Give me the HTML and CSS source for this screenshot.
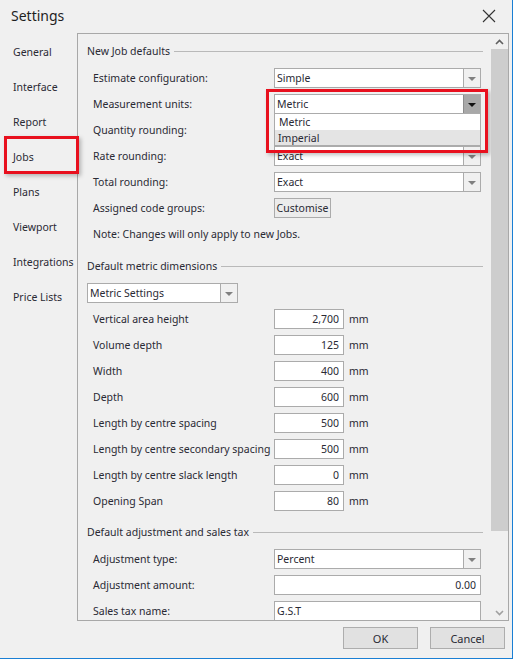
FILE: index.html
```html
<!DOCTYPE html>
<html>
<head>
<meta charset="utf-8">
<link rel="stylesheet" href="styles.css">
</head>
<body>
<div class="window">
  <div class="titlebar">
    <span class="title">Settings</span>
    <svg class="close" width="14" height="14" viewBox="0 0 14 14"><path d="M1 1L13 13M13 1L1 13" stroke="#333" stroke-width="1.1" fill="none"/></svg>
  </div>
  <div class="main">
    <nav class="sidebar">
      <div class="nav-item">General</div>
      <div class="nav-item">Interface</div>
      <div class="nav-item">Report</div>
      <div class="nav-item active">Jobs<span class="highlight"></span></div>
      <div class="nav-item">Plans</div>
      <div class="nav-item">Viewport</div>
      <div class="nav-item">Integrations</div>
      <div class="nav-item">Price Lists</div>
    </nav>
    <section class="panel">
      <div class="content">
        <div class="group-header first"><span>New Job defaults</span></div>
        <div class="row"><span class="label">Estimate configuration:</span><div class="combo"><span class="value">Simple</span><span class="drop"><i class="arrow"></i></span></div></div>
        <div class="row"><span class="label">Measurement units:</span>
          <div class="combo open"><span class="value">Metric</span><span class="drop"><i class="arrow"></i></span>
            <div class="dropdown">
              <div class="opt">Metric</div>
              <div class="opt hover">Imperial</div>
            </div>
            <span class="highlight"></span>
          </div>
        </div>
        <div class="row"><span class="label">Quantity rounding:</span><div class="combo covered"><span class="value">Exact</span><span class="drop"><i class="arrow"></i></span></div></div>
        <div class="row"><span class="label">Rate rounding:</span><div class="combo"><span class="value">Exact</span><span class="drop"><i class="arrow"></i></span></div></div>
        <div class="row"><span class="label">Total rounding:</span><div class="combo"><span class="value">Exact</span><span class="drop"><i class="arrow"></i></span></div></div>
        <div class="row"><span class="label">Assigned code groups:</span><button class="small-btn">Customise</button></div>
        <div class="row"><span class="label">Note: Changes will only apply to new Jobs.</span></div>

        <div class="group-header second"><span>Default metric dimensions</span></div>
        <div class="row flush"><div class="combo narrow"><span class="value">Metric Settings</span><span class="drop"><i class="arrow"></i></span></div></div>
        <div class="row"><span class="label">Vertical area height</span><span class="num">2,700</span><span class="unit">mm</span></div>
        <div class="row"><span class="label">Volume depth</span><span class="num">125</span><span class="unit">mm</span></div>
        <div class="row"><span class="label">Width</span><span class="num">400</span><span class="unit">mm</span></div>
        <div class="row"><span class="label">Depth</span><span class="num">600</span><span class="unit">mm</span></div>
        <div class="row"><span class="label">Length by centre spacing</span><span class="num">500</span><span class="unit">mm</span></div>
        <div class="row"><span class="label">Length by centre secondary spacing</span><span class="num">500</span><span class="unit">mm</span></div>
        <div class="row"><span class="label">Length by centre slack length</span><span class="num">0</span><span class="unit">mm</span></div>
        <div class="row"><span class="label">Opening Span</span><span class="num">80</span><span class="unit">mm</span></div>

        <div class="group-header third"><span>Default adjustment and sales tax</span></div>
        <div class="row"><span class="label">Adjustment type:</span><div class="combo"><span class="value">Percent</span><span class="drop"><i class="arrow"></i></span></div></div>
        <div class="row"><span class="label">Adjustment amount:</span><span class="text-input right">0.00</span></div>
        <div class="row"><span class="label">Sales tax name:</span><span class="text-input">G.S.T</span></div>
      </div>
      <div class="scrollbar">
        <svg class="sb-arrow" width="9" height="6" viewBox="0 0 9 6"><path d="M1 5L4.5 1.5L8 5" stroke="#606060" stroke-width="1.6" fill="none"/></svg>
        <div class="thumb"></div>
        <div class="track-rest"></div>
        <svg class="sb-arrow" width="9" height="6" viewBox="0 0 9 6"><path d="M1 1L4.5 4.5L8 1" stroke="#a0a0a0" stroke-width="1.6" fill="none"/></svg>
      </div>
    </section>
  </div>
  <div class="footer">
    <button class="btn">OK</button>
    <button class="btn">Cancel</button>
  </div>
</div>
</body>
</html>
```
FILE: styles.css
```css
* { box-sizing: border-box; }
html, body { margin: 0; padding: 0; }
body {
  background: #f0f0f0;
  font-family: "Noto Sans", "Liberation Sans", sans-serif;
  font-size: 10.5px;
  color: #2a2a34;
}
.window {
  width: 513px;
  height: 659px;
  border-right: 1px solid #1a7fd4;
  border-bottom: 1px solid #1a7fd4;
  display: flex;
  flex-direction: column;
  overflow: hidden;
}
.titlebar {
  height: 33px;
  flex: none;
  display: flex;
  align-items: center;
  justify-content: space-between;
  padding: 0 16px 2px 11px;
}
.title { font-size: 14px; color: #1e1e1e; }
.close { display: block; }
.main {
  display: flex;
  height: 588px;
  flex: none;
}
.sidebar {
  width: 77px;
  flex: none;
  padding-top: 2px;
}
.nav-item {
  position: relative;
  height: 35px;
  line-height: 35px;
  padding-left: 13px;
  white-space: nowrap;
}
.nav-item .highlight {
  position: absolute;
  left: 4px;
  top: -4px;
  width: 75px;
  height: 38px;
  border: 3px solid #e8101e;
  box-shadow: 2px 2px 4px rgba(0,0,0,0.25);
  z-index: 5;
}
.panel {
  width: 432px;
  flex: none;
  border: 1px solid #a8a8a8;
  display: flex;
  background: #f0f0f0;
}
.content {
  flex: 1;
  overflow: hidden;
  padding: 0 8px 0 9px;
  position: relative;
}
.group-header {
  height: 20px;
  display: flex;
  align-items: center;
  margin-bottom: 4px;
}
.group-header::after {
  content: "";
  flex: 1;
  height: 1px;
  background: #b9b9b9;
  margin-left: 4px;
}
.group-header.first { margin-top: 7px; }
.group-header.second { margin-top: 9px; }
.group-header.third { margin-top: 8px; }
.row {
  height: 26px;
  display: flex;
  align-items: center;
  padding-left: 6px;
}
.row.flush { padding-left: 0; }
.label {
  width: 181px;
  flex: none;
  white-space: nowrap;
}
.combo {
  position: relative;
  width: 207px;
  height: 20px;
  border: 1px solid #ababab;
  background: #fff;
  display: flex;
}
.combo.narrow { width: 151px; }
.combo .value {
  flex: 1;
  padding-left: 2px;
  line-height: 18px;
}
.combo.covered .value { visibility: hidden; }
.drop {
  width: 17px;
  flex: none;
  border-left: 1px solid #ababab;
  background: #f0f0f0;
  display: flex;
  align-items: center;
  justify-content: center;
}
.arrow {
  width: 0;
  height: 0;
  border-left: 4px solid transparent;
  border-right: 4px solid transparent;
  border-top: 4px solid #808080;
  margin-top: 1px;
}
.combo.open { z-index: 3; }
.combo.open .drop {
  background: #a8a8a8;
  border-left-color: #8c8c8c;
}
.combo.open .arrow { border-top-color: #111; }
.dropdown {
  position: absolute;
  left: -1px;
  top: 19px;
  width: 207px;
  border: 1px solid #ababab;
  border-top: none;
  background: #fff;
}
.opt {
  height: 16px;
  line-height: 17px;
  padding-left: 4px;
}
.opt.hover { background: #e4e4e4; height: 15px; line-height: 16px; padding-left: 3px; }
.combo .highlight {
  position: absolute;
  left: -9px;
  top: -6px;
  width: 222px;
  height: 64px;
  border: 3px solid #e8101e;
  box-shadow: 2px 2px 4px rgba(0,0,0,0.25);
}
.small-btn {
  font: inherit;
  color: inherit;
  height: 20px;
  width: 57px;
  padding: 0;
  border: 1px solid #ababab;
  background: #ececec;
}
.num {
  width: 70px;
  height: 20px;
  border: 1px solid #ababab;
  background: #fff;
  text-align: right;
  padding-right: 4px;
  line-height: 18px;
}
.unit { margin-left: 5px; }
.text-input {
  width: 207px;
  height: 20px;
  border: 1px solid #ababab;
  background: #fff;
  line-height: 18px;
  padding-left: 2px;
}
.text-input.right { text-align: right; padding-right: 4px; }
.scrollbar {
  width: 17px;
  flex: none;
  display: flex;
  flex-direction: column;
  align-items: center;
  background: #f0f0f0;
}
.sb-arrow { display: block; margin: 5px 0 4px; flex: none; }
.thumb {
  width: 17px;
  height: 482px;
  background: #cdcdcd;
  flex: none;
}
.track-rest { flex: 1; }
.footer {
  flex: 1;
  display: flex;
  justify-content: flex-end;
  gap: 12px;
  padding: 6px 7px 0 0;
}
.btn {
  font: inherit;
  font-size: 11px;
  color: inherit;
  width: 75px;
  height: 22px;
  padding: 0;
  border: 1px solid #adadad;
  background: #e1e1e1;
}
```
